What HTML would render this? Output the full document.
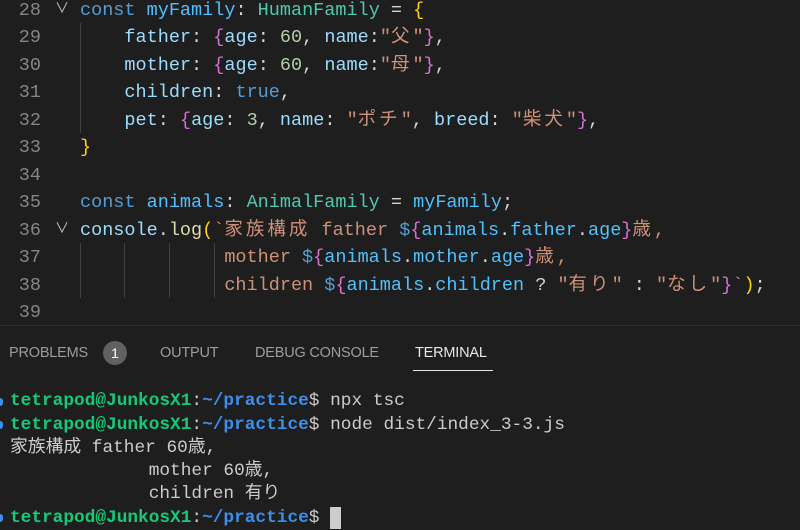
<!DOCTYPE html>
<html><head><meta charset="utf-8"><style>
html,body{margin:0;padding:0;width:800px;height:529px;overflow:hidden;background:#1e1e1e}
.c{position:absolute;left:0;height:27.5px;line-height:27.5px;font-family:"Liberation Mono","Noto Sans CJK JP",monospace;font-size:18.5px;white-space:pre;color:#d4d4d4}
.n{position:absolute;left:0;width:41px;text-align:right;color:#858585}
.t{position:absolute;left:80px}
.k{color:#569cd6}.v{color:#9cdcfe}.cv{color:#4fc1ff}.ty{color:#4ec9b0}.nu{color:#b5cea8}.s{color:#ce9178}.y{color:#ffd700}.p{color:#da70d6}.f{color:#dcdcaa}
.j{letter-spacing:3px}
.g{position:absolute;width:1px;background:#404040}
.fold{position:absolute;left:55px;color:#c5c5c5;font-size:14px}
.tab{position:absolute;top:345px;font-family:"Liberation Sans",sans-serif;font-size:14.5px;color:#9d9d9d;letter-spacing:-0.2px}
.tl{position:absolute;left:10px;height:23.2px;line-height:23.2px;font-family:"Liberation Mono","Noto Sans CJK JP",monospace;font-size:17.8px;white-space:pre;color:#cccccc}
.gr{color:#16c97a;font-weight:bold}.bl{color:#3b8eea;font-weight:bold}
</style></head><body>
<div class="g" style="left:80px;top:23px;height:110px"></div>
<div class="g" style="left:80px;top:243px;height:55px"></div>
<div class="g" style="left:124px;top:243px;height:55px"></div>
<div class="g" style="left:169px;top:243px;height:55px"></div>
<div class="g" style="left:214px;top:243px;height:55px"></div>

<div class="c" style="top:-3px"><span class="n">28</span><span class="fold" style="top:0">∨</span><span class="t"><span class="k">const</span> <span class="cv">myFamily</span>: <span class="ty">HumanFamily</span> = <span class="y">{</span></span></div>
<div class="c" style="top:24px"><span class="n">29</span><span class="t">    <span class="v">father</span>: <span class="p">{</span><span class="v">age</span>: <span class="nu">60</span>, <span class="v">name</span>:<span class="s">"<span class="j">父</span>"</span><span class="p">}</span>,</span></div>
<div class="c" style="top:51.5px"><span class="n">30</span><span class="t">    <span class="v">mother</span>: <span class="p">{</span><span class="v">age</span>: <span class="nu">60</span>, <span class="v">name</span>:<span class="s">"<span class="j">母</span>"</span><span class="p">}</span>,</span></div>
<div class="c" style="top:79px"><span class="n">31</span><span class="t">    <span class="v">children</span>: <span class="k">true</span>,</span></div>
<div class="c" style="top:106.5px"><span class="n">32</span><span class="t">    <span class="v">pet</span>: <span class="p">{</span><span class="v">age</span>: <span class="nu">3</span>, <span class="v">name</span>: <span class="s">"<span class="j">ポチ</span>"</span>, <span class="v">breed</span>: <span class="s">"<span class="j">柴犬</span>"</span><span class="p">}</span>,</span></div>
<div class="c" style="top:134px"><span class="n">33</span><span class="t"><span class="y">}</span></span></div>
<div class="c" style="top:161.5px"><span class="n">34</span></div>
<div class="c" style="top:189px"><span class="n">35</span><span class="t"><span class="k">const</span> <span class="cv">animals</span>: <span class="ty">AnimalFamily</span> = <span class="cv">myFamily</span>;</span></div>
<div class="c" style="top:216.5px"><span class="n">36</span><span class="fold" style="top:0">∨</span><span class="t"><span class="v">console</span>.<span class="f">log</span><span class="y">(</span><span class="s">`<span class="j">家族構成</span> father </span><span class="k">$</span><span class="p">{</span><span class="cv">animals</span>.<span class="cv">father</span>.<span class="cv">age</span><span class="p">}</span><span class="s"><span class="j">歳</span>,</span></span></div>
<div class="c" style="top:244px"><span class="n">37</span><span class="t">             <span class="s">mother </span><span class="k">$</span><span class="p">{</span><span class="cv">animals</span>.<span class="cv">mother</span>.<span class="cv">age</span><span class="p">}</span><span class="s"><span class="j">歳</span>,</span></span></div>
<div class="c" style="top:271.5px"><span class="n">38</span><span class="t">             <span class="s">children </span><span class="k">$</span><span class="p">{</span><span class="cv">animals</span>.<span class="cv">children</span> ? <span class="s">"<span class="j">有り</span>"</span> : <span class="s">"<span class="j">なし</span>"</span><span class="p">}</span><span class="s">`</span><span class="y">)</span>;</span></div>
<div class="c" style="top:299px"><span class="n">39</span></div>

<div style="position:absolute;left:0;top:325px;width:800px;height:1px;background:#2f2f2f"></div>
<div class="tab" style="left:9px">PROBLEMS</div>
<div style="position:absolute;left:103px;top:341px;width:24px;height:24px;border-radius:12px;background:#616161;color:#fff;font:14px 'Liberation Sans',sans-serif;text-align:center;line-height:24px">1</div>
<div class="tab" style="left:160px">OUTPUT</div>
<div class="tab" style="left:255px">DEBUG CONSOLE</div>
<div class="tab" style="left:415px;color:#e7e7e7">TERMINAL</div>
<div style="position:absolute;left:413px;top:370px;width:80px;height:1px;background:#e7e7e7"></div>

<div style="position:absolute;left:0;top:398px;width:3px;height:8px;background:#3b8eea;border-radius:0 4px 4px 0"></div>
<div style="position:absolute;left:0;top:421px;width:3px;height:8px;background:#3b8eea;border-radius:0 4px 4px 0"></div>
<div style="position:absolute;left:0;top:514px;width:3px;height:8px;background:#3b8eea;border-radius:0 4px 4px 0"></div>
<div class="tl" style="top:390px"><span class="gr">tetrapod@JunkosX1</span>:<span class="bl">~/practice</span>$ npx tsc</div>
<div class="tl" style="top:413.5px"><span class="gr">tetrapod@JunkosX1</span>:<span class="bl">~/practice</span>$ node dist/index_3-3.js</div>
<div class="tl" style="top:437px">家族構成 father 60歳,</div>
<div class="tl" style="top:460px">             mother 60歳,</div>
<div class="tl" style="top:483px">             children 有り</div>
<div class="tl" style="top:506.5px"><span class="gr">tetrapod@JunkosX1</span>:<span class="bl">~/practice</span>$ </div>
<div style="position:absolute;left:330px;top:507px;width:11px;height:22px;background:#cccccc"></div>
</body></html>
